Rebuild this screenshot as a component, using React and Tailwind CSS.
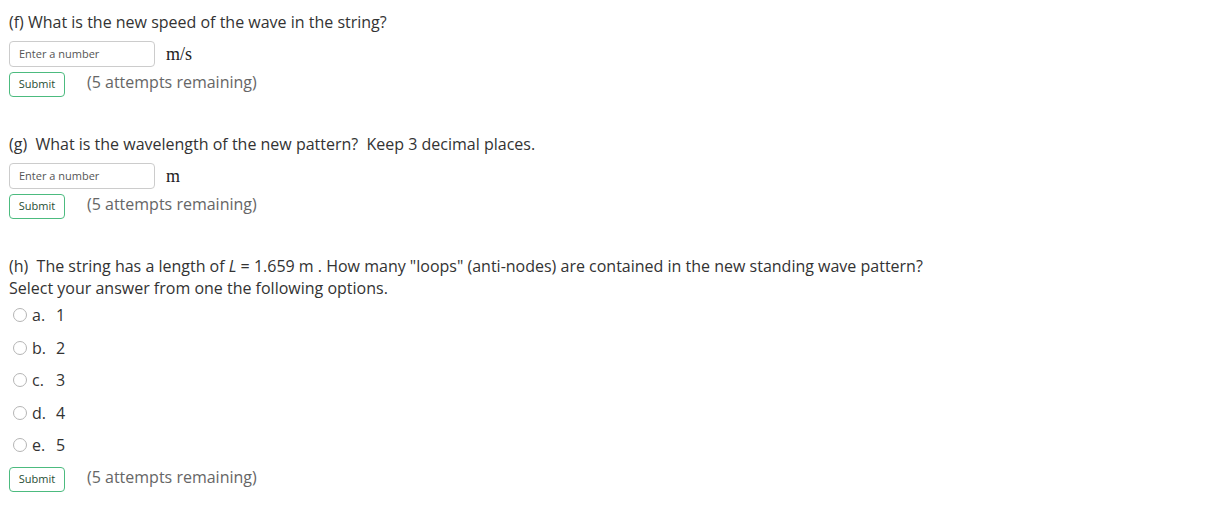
import React from 'react';

const NumberQuestion = ({ label, unit }) => (
  <div>
    <div className="h-[22px] leading-[22px]">{label}</div>
    <div className="mt-[8px] flex h-[26px] items-center">
      <input
        type="text"
        placeholder="Enter a number"
        className="h-[26px] w-[146px] rounded-[4px] border border-[#cccccc] px-[9px] pb-[1px] text-[11px] text-[#333] placeholder:text-[#555] outline-none"
      />
      <span className="ml-[11px] font-['Liberation_Serif',serif] text-[18px] leading-[22px] text-[#222]">{unit}</span>
    </div>
    <SubmitRow className="mt-[5px]" />
  </div>
);

const SubmitRow = ({ className = '' }) => (
  <div className={`flex items-start ${className}`}>
    <button className="h-[25px] w-[56px] rounded-[4px] border border-[#4cbb7f] bg-white text-[11px] text-[#1f4d33]">
      Submit
    </button>
    <span className="ml-[22px] leading-[21px] text-[#666]">(5 attempts remaining)</span>
  </div>
);

const options = [
  ['a.', '1'],
  ['b.', '2'],
  ['c.', '3'],
  ['d.', '4'],
  ['e.', '5'],
];

export default function App() {
  return (
    <div className="min-h-[512px] bg-white pl-[9px] pt-[11px] font-['Open_Sans',sans-serif] text-[16px] text-[#333]">
      <NumberQuestion label="(f) What is the new speed of the wave in the string?" unit="m/s" />

      <div className="mt-[36px]">
        <NumberQuestion
          label={<>(g)&nbsp; What is the wavelength of the new pattern?&nbsp; Keep 3 decimal places.</>}
          unit="m"
        />
      </div>

      <div className="mt-[36px]">
        <div className="leading-[22px]">
          <div>
            (h)&nbsp; The string has a length of <span className="italic">L</span> = 1.659 m . How many "loops" (anti-nodes) are contained in the new standing wave pattern?
          </div>
          <div>Select your answer from one the following options.</div>
        </div>
        <div className="mt-[5px] flex flex-col gap-[10.5px]">
          {options.map(([k, v]) => (
            <label key={k} className="flex h-[22px] items-center">
              <span className="ml-[4px] inline-block h-[14px] w-[14px] rounded-full border border-[#b5b5b5] bg-white" />
              <span className="ml-[5px] w-[24px]">{k}</span>
              <span>{v}</span>
            </label>
          ))}
        </div>
        <SubmitRow className="mt-[11px]" />
      </div>
    </div>
  );
}
